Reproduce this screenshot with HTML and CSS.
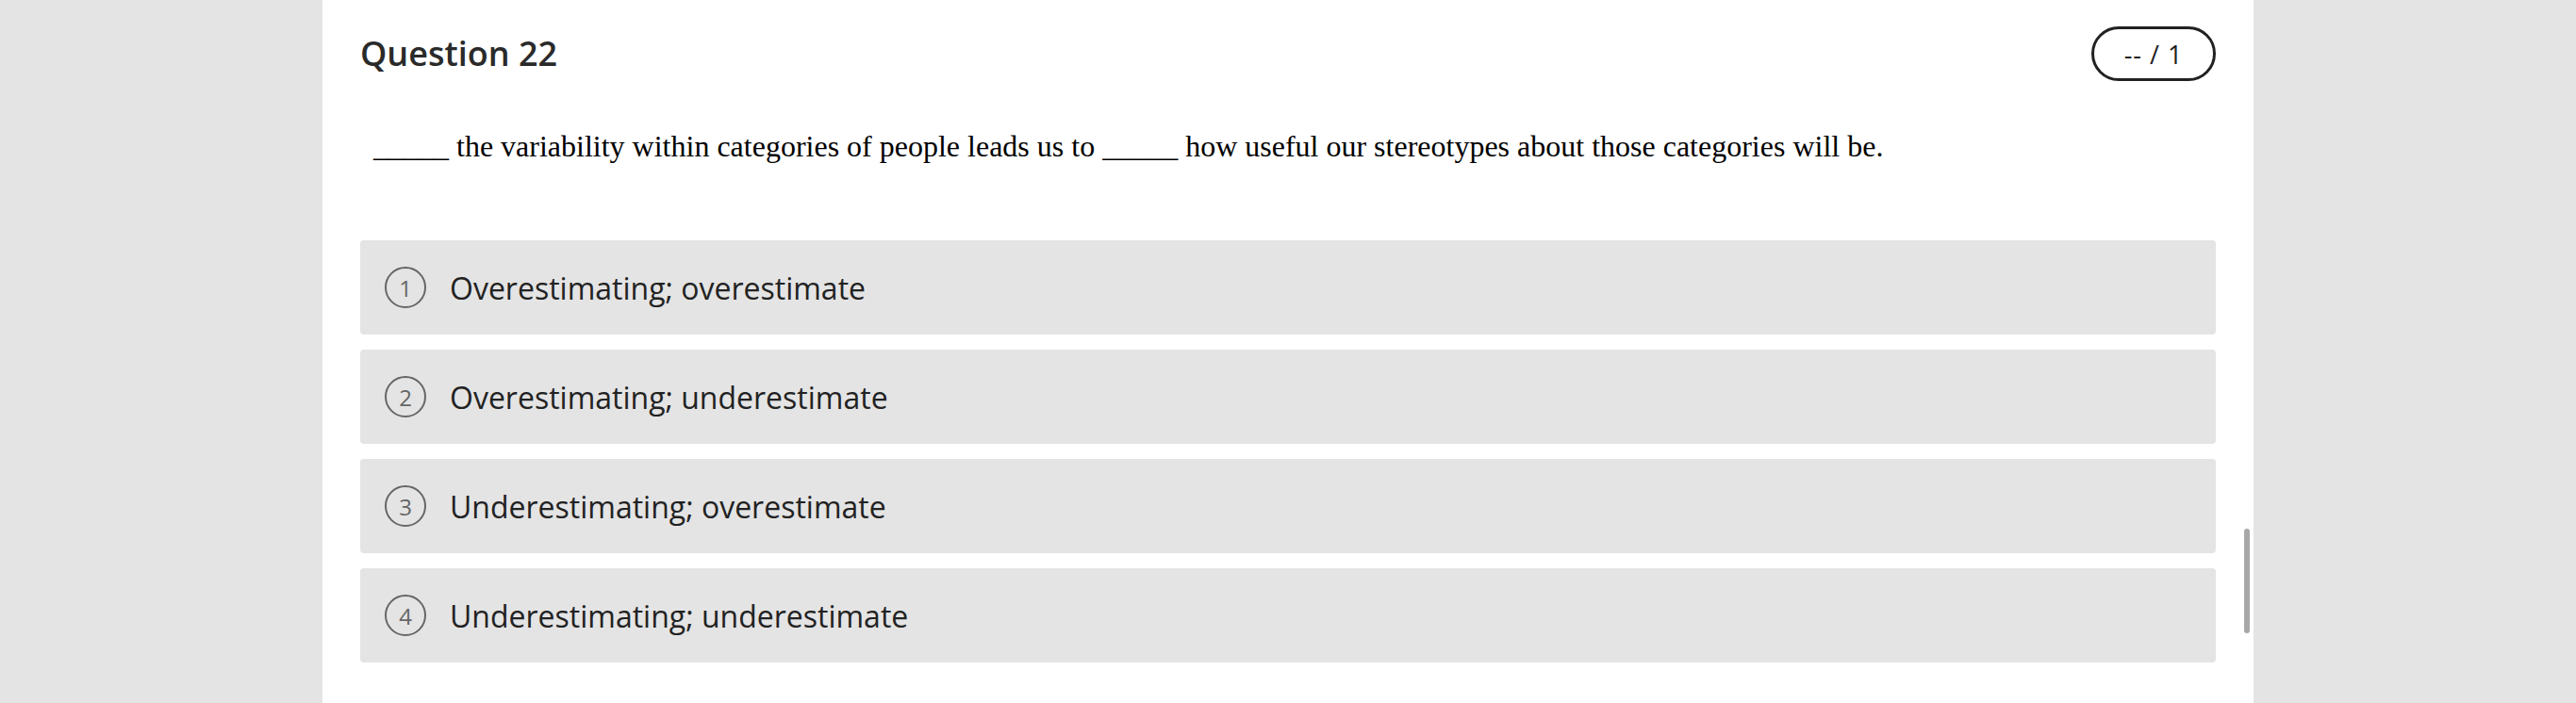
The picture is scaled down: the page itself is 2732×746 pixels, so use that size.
FILE: index.html
```html
<!DOCTYPE html>
<html lang="en">
<head>
    <meta charset="UTF-8">
    <meta name="viewport" content="width=device-width, initial-scale=1.0">
    <title>Question 22</title>
    <link rel="stylesheet" href="styles.css">
</head>
<body>
    <main class="quiz-panel">
        <div class="question-head">
            <h2 class="question-title">Question 22</h2>
            <span class="score-pill">-- / 1</span>
        </div>

        <p class="question-stem">_____ the variability within categories of people leads us to _____ how useful our stereotypes about those categories will be.</p>

        <ul class="choices">
            <li class="choice">
                <span class="choice-num">1</span>
                <span class="choice-text">Overestimating; overestimate</span>
            </li>
            <li class="choice">
                <span class="choice-num">2</span>
                <span class="choice-text">Overestimating; underestimate</span>
            </li>
            <li class="choice">
                <span class="choice-num">3</span>
                <span class="choice-text">Underestimating; overestimate</span>
            </li>
            <li class="choice">
                <span class="choice-num">4</span>
                <span class="choice-text">Underestimating; underestimate</span>
            </li>
        </ul>

        <!-- overlay scrollbar of the panel -->
        <div class="scroll-thumb"></div>
    </main>
</body>
</html>
```

FILE: styles.css
```css
body {
    margin: 0;
    background-color: #e4e4e4;
    font-family: 'Open Sans', 'Noto Sans', sans-serif;
    color: #222;
    overflow: hidden;
}

.quiz-panel {
    position: relative;
    width: 2048px;
    min-height: 746px;
    margin: 0 auto;
    padding: 0 40px;
    box-sizing: border-box;
    background-color: white;
}

.question-head {
    display: flex;
    justify-content: space-between;
    align-items: center;
    padding-top: 28px;
}

.question-title {
    margin: 0 0 2px 0;
    font-size: 36px;
    font-weight: 600;
    color: #2a2a2a;
}

.score-pill {
    display: flex;
    align-items: center;
    justify-content: center;
    width: 132px;
    height: 58px;
    box-sizing: border-box;
    border: 3px solid #222;
    border-radius: 30px;
    font-size: 27px;
    letter-spacing: 1px;
    color: #222;
}

.question-stem {
    margin: 51px 0 0 0;
    padding-left: 14px;
    font-family: 'Liberation Serif', 'Times New Roman', serif;
    font-size: 32px;
    line-height: 36px;
    color: #000;
}

.choices {
    list-style: none;
    margin: 82px 0 0 0;
    padding: 0;
    display: flex;
    flex-direction: column;
    gap: 16px;
}

.choice {
    display: flex;
    align-items: center;
    height: 100px;
    padding-left: 26px;
    background-color: #e4e4e4;
    border-radius: 4px;
}

.choice-num {
    display: flex;
    align-items: center;
    justify-content: center;
    width: 44px;
    height: 44px;
    box-sizing: border-box;
    border: 2px solid #666;
    border-radius: 50%;
    font-size: 24px;
    color: #666;
}

.choice-text {
    margin-left: 25px;
    font-size: 32px;
    color: #222;
}

.scroll-thumb {
    position: absolute;
    top: 561px;
    right: 4px;
    width: 6px;
    height: 111px;
    border-radius: 3px;
    background-color: #a8a8a8;
}
```
